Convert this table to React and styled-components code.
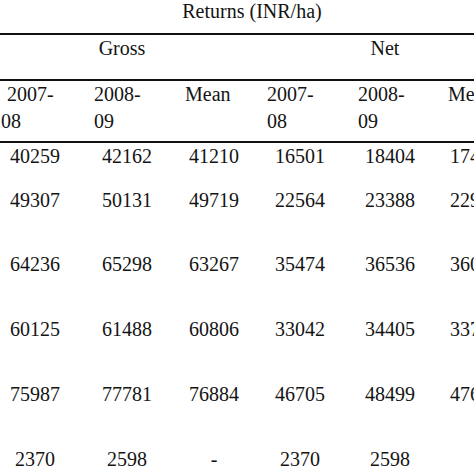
import React from 'react';
import styled, { createGlobalStyle } from 'styled-components';

const GlobalStyle = createGlobalStyle`
  html, body {
    margin: 0;
    padding: 0;
    background: #fff;
    overflow: hidden;
  }
  body {
    font-family: "Liberation Serif", "Times New Roman", serif;
    color: #141414;
  }
`;

const Table = styled.div`
  display: grid;
  grid-template-columns: 92px 92px 82px 90px 90px 80px;
  width: 526px;
  margin-left: -11px;
  font-size: 20px;
`;

const Title = styled.div`
  grid-column: 1 / -1;
  height: 33px;
  line-height: 22px;
  text-align: center;
  border-bottom: 2px solid #111;
`;

const Group = styled.div`
  grid-column: ${(p) => p.$span};
  height: 44px;
  line-height: 26px;
  text-align: center;
  border-bottom: 2px solid #111;
`;

const HeadCell = styled.div`
  height: 62px;
  line-height: 27px;
  padding-left: ${(p) => p.$pad}px;
  text-indent: ${(p) => p.$indent || 0}px;
  border-bottom: 2px solid #111;
  box-sizing: border-box;
  white-space: nowrap;
`;

const Cell = styled.div`
  height: ${(p) => p.$h}px;
  line-height: 27px;
  text-align: center;
  white-space: nowrap;
`;

const heads = [
  { a: '2007-', b: '08', pad: 12, indent: 6 },
  { a: '2008-', b: '09', pad: 13 },
  { a: 'Mean', b: '', pad: 12 },
  { a: '2007-', b: '08', pad: 12 },
  { a: '2008-', b: '09', pad: 13 },
  { a: 'Mean', b: '', pad: 13 },
];

const rows = [
  { h: 44, v: ['40259', '42162', '41210', '16501', '18404', '17453'] },
  { h: 64, v: ['49307', '50131', '49719', '22564', '23388', '22976'] },
  { h: 65, v: ['64236', '65298', '63267', '35474', '36536', '36005'] },
  { h: 65, v: ['60125', '61488', '60806', '33042', '34405', '33723'] },
  { h: 65, v: ['75987', '77781', '76884', '46705', '48499', '47602'] },
  { h: 40, v: ['2370', '2598', '-', '2370', '2598', ''] },
];

export default function App() {
  return (
    <>
      <GlobalStyle />
      <Table>
        <Title>Returns (INR/ha)</Title>
        <Group $span="1 / 4">Gross</Group>
        <Group $span="4 / 7">Net</Group>
        {heads.map((h, i) => (
          <HeadCell key={i} $pad={h.pad} $indent={h.indent}>
            {h.a}
            <br />
            {h.b}
          </HeadCell>
        ))}
        {rows.map((r, ri) =>
          r.v.map((val, ci) => (
            <Cell key={`${ri}-${ci}`} $h={r.h}>
              {val}
            </Cell>
          ))
        )}
      </Table>
    </>
  );
}
